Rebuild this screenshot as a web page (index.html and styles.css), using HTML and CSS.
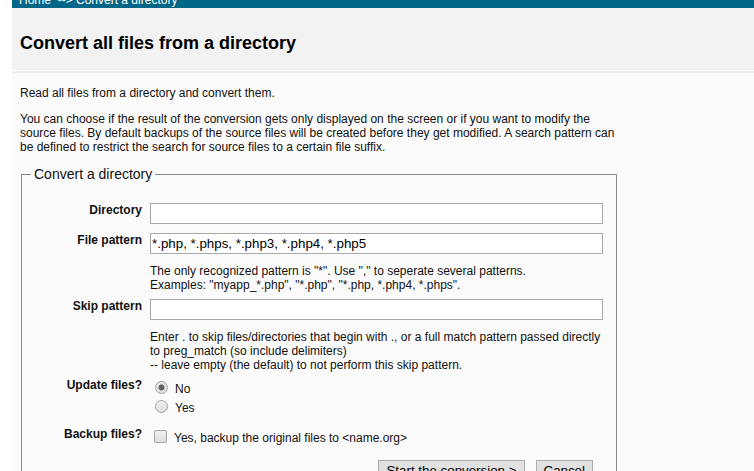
FILE: index.html
```html
<!DOCTYPE html>
<html lang="en">
<head>
    <meta charset="UTF-8">
    <title>Convert all files from a directory</title>
    <link rel="stylesheet" href="styles.css">
</head>
<body>
    <div class="page">
        <div class="crumbs">Home &nbsp;--&gt; Convert a directory</div>

        <div class="header">
            <h1>Convert all files from a directory</h1>
        </div>

        <div class="content">
            <p>Read all files from a directory and convert them.</p>
            <p class="intro">You can choose if the result of the conversion gets only displayed on the screen or if you want to modify the source files. By default backups of the source files will be created before they get modified. A search pattern can be defined to restrict the search for source files to a certain file suffix.</p>

            <!-- Formulario del directorio -->
            <form>
                <fieldset>
                    <legend>Convert a directory</legend>

                    <div class="row row-dir">
                        <label for="dir">Directory</label>
                        <div><input type="text" id="dir"></div>
                    </div>

                    <div class="row row-pattern">
                        <label for="pattern">File pattern</label>
                        <div>
                            <input type="text" id="pattern" value="*.php, *.phps, *.php3, *.php4, *.php5">
                            <p class="help">The only recognized pattern is "*". Use "," to seperate several patterns.<br>Examples: "myapp_*.php", "*.php", "*.php, *.php4, *.phps".</p>
                        </div>
                    </div>

                    <div class="row row-skip">
                        <label for="skip">Skip pattern</label>
                        <div>
                            <input type="text" id="skip">
                            <p class="help">Enter . to skip files/directories that begin with ., or a full match pattern passed directly to preg_match (so include delimiters)<br>-- leave empty (the default) to not perform this skip pattern.</p>
                        </div>
                    </div>

                    <div class="row row-update">
                        <label>Update files?</label>
                        <div>
                            <label class="option"><input type="radio" name="update" checked> <span>No</span></label>
                            <label class="option"><input type="radio" name="update"> <span>Yes</span></label>
                        </div>
                    </div>

                    <div class="row row-backup">
                        <label>Backup files?</label>
                        <div>
                            <label class="option check"><input type="checkbox"> <span>Yes, backup the original files to &lt;name.org&gt;</span></label>
                        </div>
                    </div>

                    <div class="buttons">
                        <button type="submit">Start the conversion &gt;</button>
                        <button type="button">Cancel</button>
                    </div>
                </fieldset>
            </form>
        </div>
    </div>
</body>
</html>
```

FILE: styles.css
```css
body {
    margin: 0;
    padding: 0;
    background-color: #ffffff;
    font-family: "Liberation Sans", Arial, sans-serif;
    font-size: 12px;
    color: #111;
}

.page {
    margin-left: 12px;
    margin-top: -14px; /* la pagina esta desplazada */
}

.crumbs {
    height: 22px;
    padding: 7px 7px 0;
    box-sizing: border-box;
    background-color: #006687;
    color: #ffffff;
    font-size: 12px;
    line-height: 14px;
    overflow: hidden;
}

.header {
    background-color: #f2f2f2;
    padding: 24px 8px 16px;
}

h1 {
    margin: 0;
    font-size: 18px;
    line-height: 22px;
    color: #000;
}

.content {
    margin-top: 1px;
    border-top: 2px solid #eeeeee;
    background-color: #fbfbfb;
    padding: 1px 8px 40px;
    min-height: 420px;
}

.content p {
    margin: 12px 0;
    line-height: 14px;
}

.intro {
    max-width: 600px;
}

fieldset {
    width: 596px;
    box-sizing: border-box;
    margin: 0 0 0 1px;
    padding: 21px 0 0 0;
    border: 1px solid #8a8a8a;
}

legend {
    margin-left: 9px;
    padding: 0 3px;
    font-size: 14px;
    line-height: 16px;
}

.row {
    display: grid;
    grid-template-columns: 120px 453px;
    column-gap: 8px;
}

.row > label {
    text-align: right;
    font-weight: bold;
    line-height: 14px;
}

.row-dir { margin-bottom: 9px; }
.row-pattern { margin-bottom: 7px; }
.row-skip { margin-bottom: 6px; }
.row-update { margin-bottom: 11px; }

input[type="text"] {
    display: block;
    width: 100%;
    height: 21px;
    box-sizing: border-box;
    margin: 0;
    padding: 0 1px;
    border: 1px solid #a9a9a9;
    background: #ffffff;
    font-family: "Liberation Sans", Arial, sans-serif;
    font-size: 13.33px;
    color: #000;
}

.content p.help {
    margin: 10px 0 0;
}

.option {
    display: flex;
    align-items: center;
    height: 19px;
}

.option span {
    padding-top: 3px;
}

input[type="radio"], input[type="checkbox"] {
    appearance: none;
    -webkit-appearance: none;
    width: 13px;
    height: 13px;
    margin: 0 7px 0 5px;
    box-sizing: border-box;
    border: 1px solid #a4a4a4;
    background: linear-gradient(#f0f0f0, #dedede);
}

input[type="radio"] {
    border-radius: 50%;
}

input[type="radio"]:checked {
    background: radial-gradient(circle, #606060 0 2.5px, #e4e4e4 3.5px);
}

input[type="checkbox"] {
    margin-left: 4px;
    border-radius: 2px;
}

.buttons {
    display: flex;
    justify-content: flex-end;
    gap: 11px;
    margin-top: 14px;
    padding: 0 23px 10px 0;
}

button {
    font-family: "Liberation Sans", Arial, sans-serif;
    font-size: 13.33px;
    padding: 2px 7px;
    background-color: #e1e1e1;
    border: 1px solid #adadad;
    color: #000;
}
```
